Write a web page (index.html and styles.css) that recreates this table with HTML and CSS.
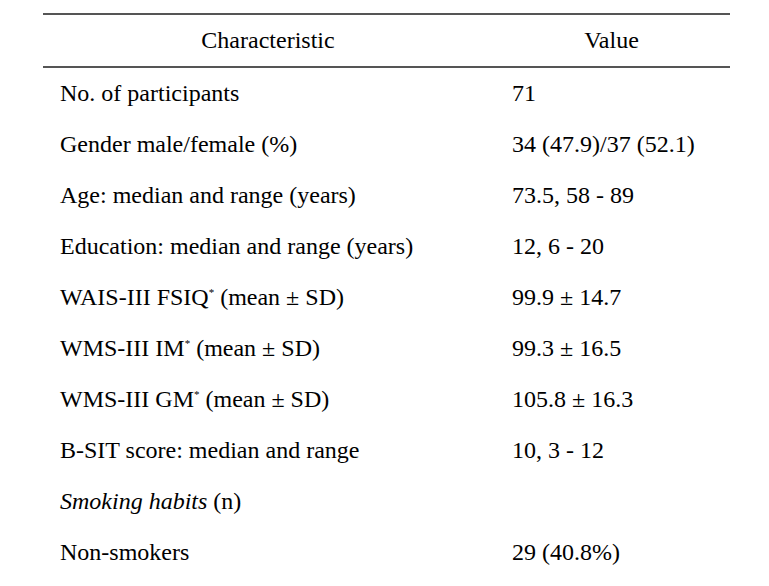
FILE: index.html
```html
<!DOCTYPE html>
<html>
<head>
<meta charset="utf-8">
<link rel="stylesheet" href="styles.css">
</head>
<body>
<div class="wrap">
<table class="data">
  <colgroup><col class="c1"><col class="c2"></colgroup>
  <thead>
    <tr><th>Characteristic</th><th>Value</th></tr>
  </thead>
  <tbody>
    <tr><td>No. of participants</td><td>71</td></tr>
    <tr><td>Gender male/female (%)</td><td>34 (47.9)/37 (52.1)</td></tr>
    <tr><td>Age: median and range (years)</td><td>73.5, 58 - 89</td></tr>
    <tr><td>Education: median and range (years)</td><td>12, 6 - 20</td></tr>
    <tr><td>WAIS-III FSIQ<sup>*</sup> (mean ± SD)</td><td>99.9 ± 14.7</td></tr>
    <tr><td>WMS-III IM<sup>*</sup> (mean ± SD)</td><td>99.3 ± 16.5</td></tr>
    <tr><td>WMS-III GM<sup>*</sup> (mean ± SD)</td><td>105.8 ± 16.3</td></tr>
    <tr><td>B-SIT score: median and range</td><td>10, 3 - 12</td></tr>
    <tr><td><em>Smoking habits</em> (n)</td><td></td></tr>
    <tr><td>Non-smokers</td><td>29 (40.8%)</td></tr>
  </tbody>
</table>
</div>
</body>
</html>
```
FILE: styles.css
```css
html, body {
  margin: 0;
  padding: 0;
  background: #ffffff;
}
body {
  font-family: "Liberation Serif", "Times New Roman", serif;
  color: #000000;
}
.wrap {
  padding: 13px 0 0 43px;
}
.data {
  width: 687px;
  border-collapse: separate;
  border-spacing: 0;
  font-size: 24px;
}
.c1 { width: 450px; }
.c2 { width: 237px; }
.data th {
  font-weight: normal;
  text-align: center;
  padding: 0;
  line-height: 51px;
  border-top: 2px solid #555555;
  border-bottom: 2px solid #555555;
}
.data td {
  padding: 0;
  line-height: 51px;
  white-space: nowrap;
  vertical-align: middle;
}
.data td:first-child { padding-left: 17px; }
.data td:last-child { padding-left: 19px; }
.data sup {
  font-size: 11px;
  line-height: 0;
  vertical-align: 9px;
}
.data em { font-style: italic; }
```
